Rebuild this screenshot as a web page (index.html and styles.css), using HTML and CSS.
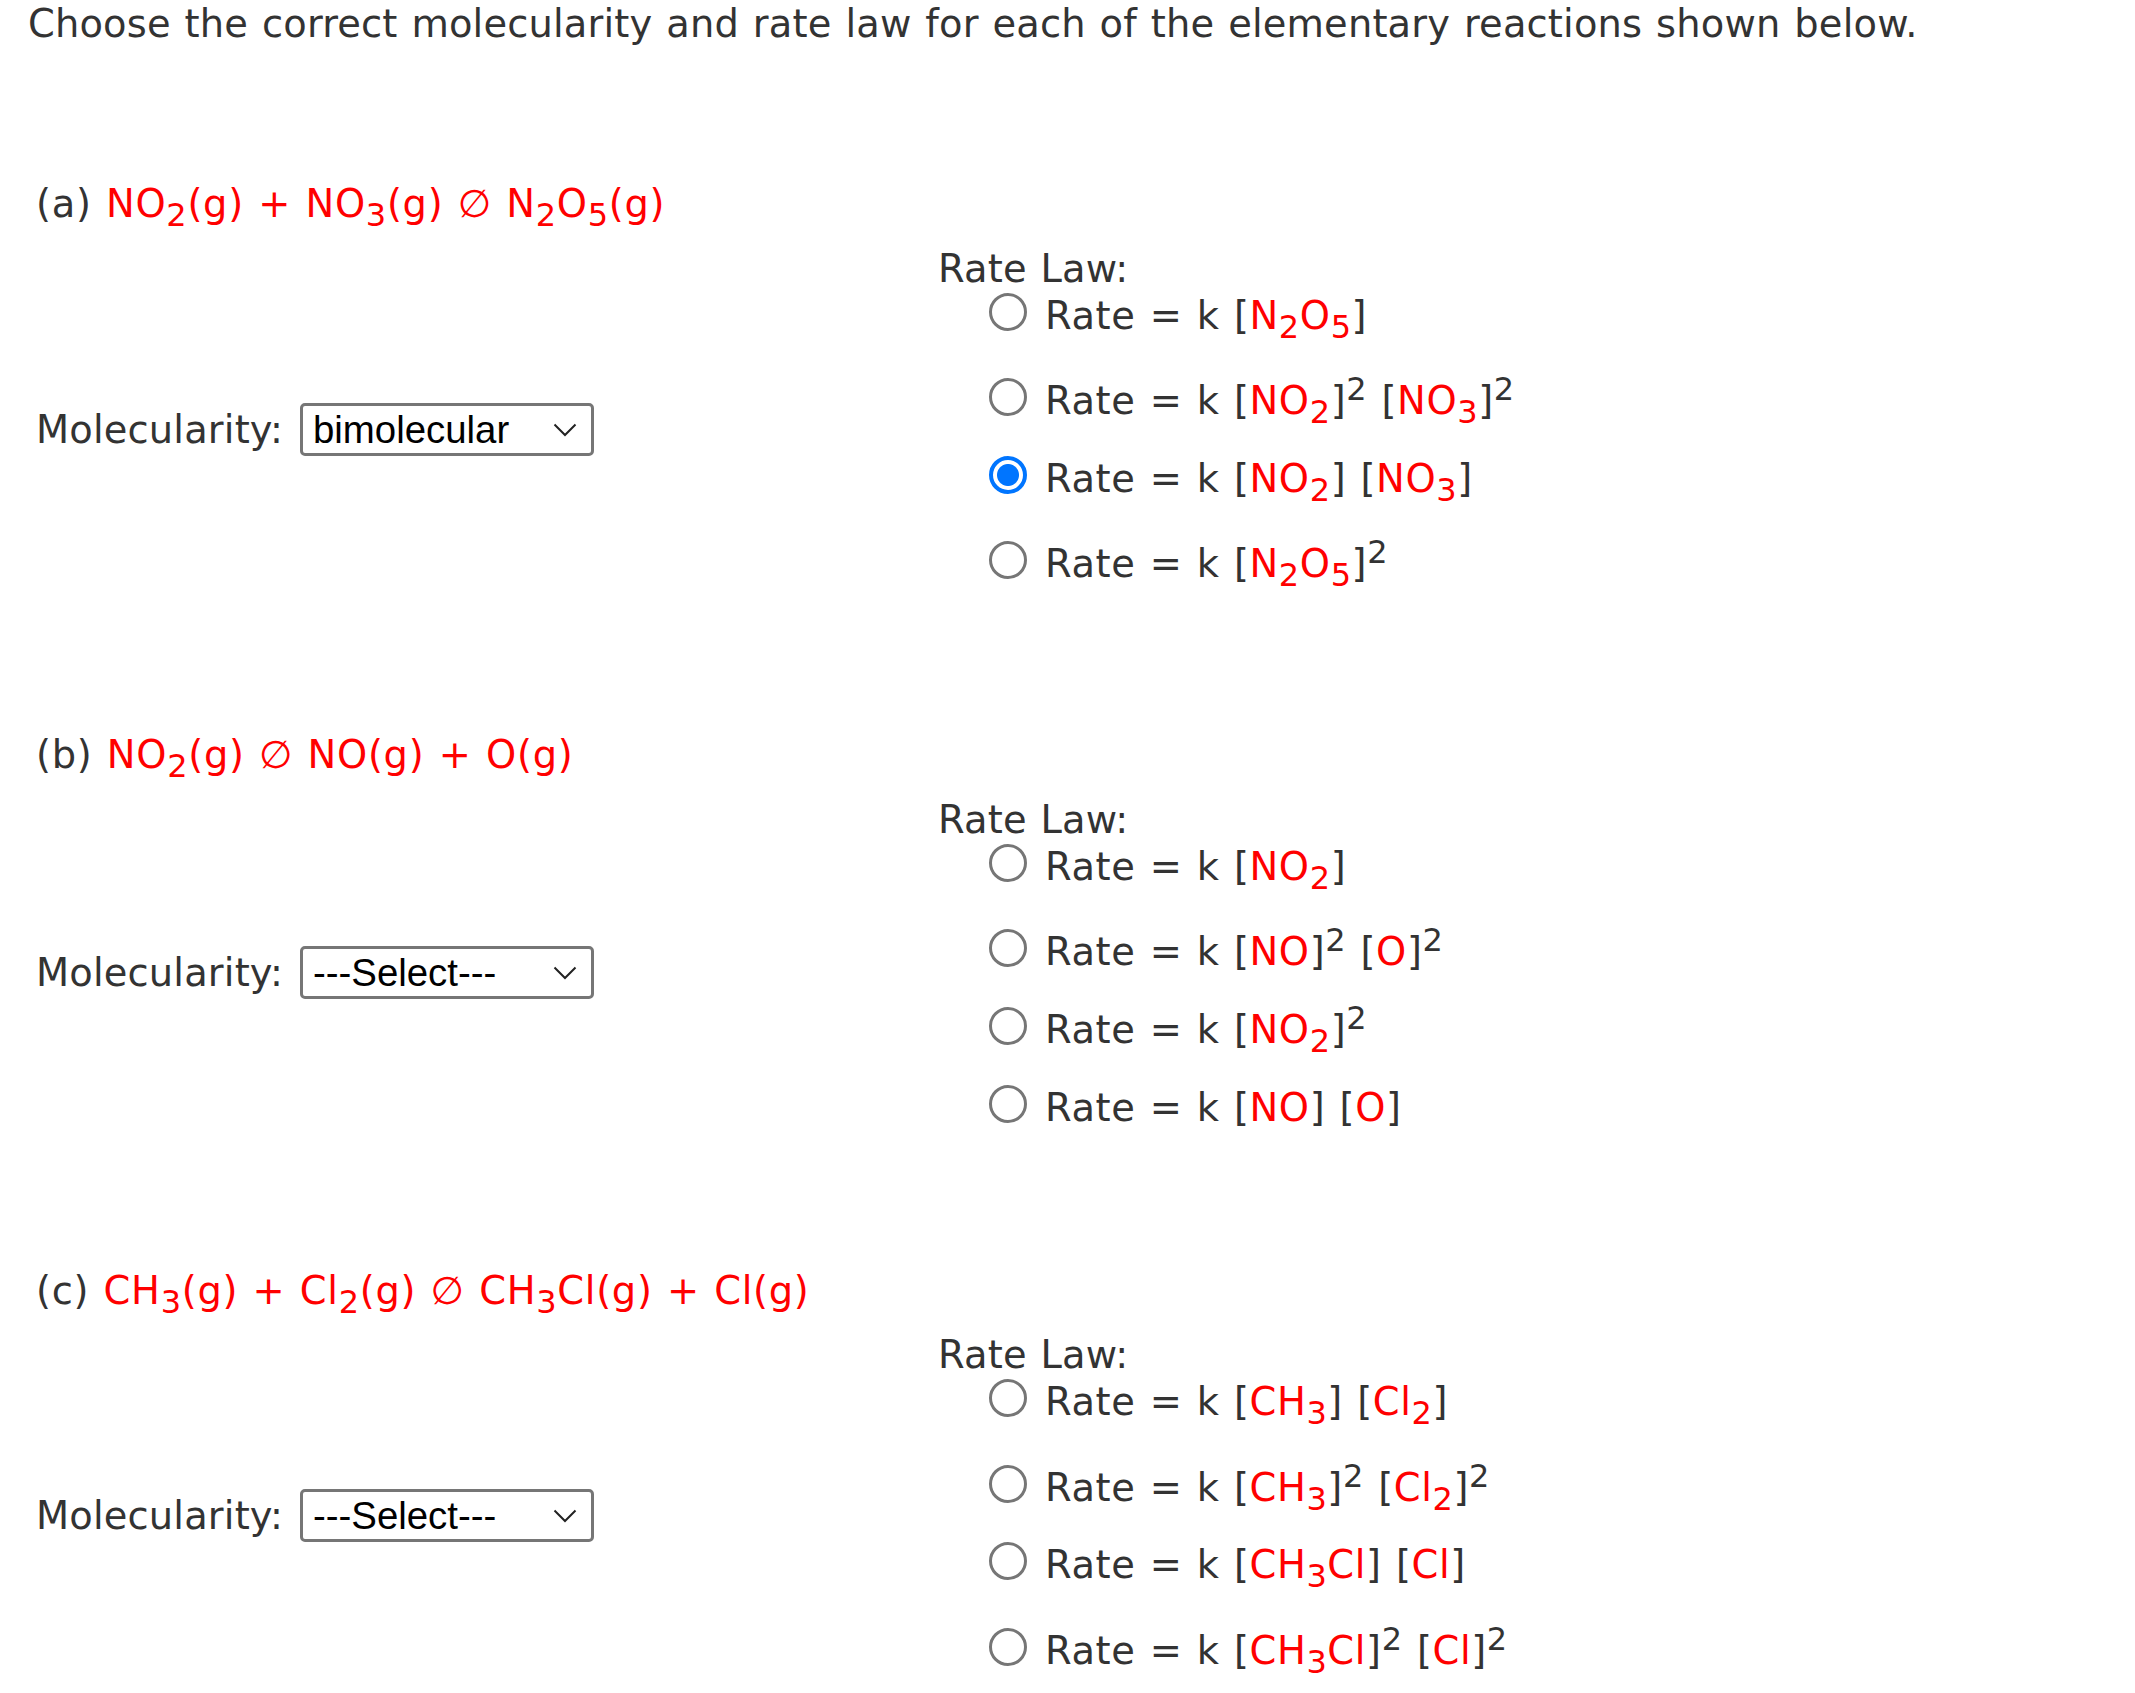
FILE: index.html
```html
<!DOCTYPE html>
<html lang="en">
<head>
<meta charset="utf-8">
<title>Molecularity and rate law</title>
<link rel="stylesheet" href="styles.css">
</head>
<body>
<div class="page">
  <p class="title">Choose the correct molecularity and rate law for each of the elementary reactions shown below.</p>

  <section class="part">
    <div class="rxn">(a) <span class="chem">NO<sub>2</sub>(g) + NO<sub>3</sub>(g) ∅ N<sub>2</sub>O<sub>5</sub>(g)</span></div>
    <div class="row">
      <div class="mol">
        <label class="mol-label" for="ma">Molecularity:</label> <span class="sel"><select id="ma">
          <option>---Select---</option>
          <option>unimolecular</option>
          <option selected>bimolecular</option>
          <option>termolecular</option>
        </select><svg class="chev" width="24" height="14" viewBox="0 0 24 14"><polyline points="1.5,1.5 12,12 22.5,1.5" fill="none" stroke="#222" stroke-width="2"/></svg></span>
      </div>
      <div class="rl">
        <div class="rl-h">Rate Law:</div>
        <label class="opt"><input type="radio" name="ra">Rate = k [<span class="chem">N<sub>2</sub>O<sub>5</sub></span>]</label>
        <label class="opt"><input type="radio" name="ra">Rate = k [<span class="chem">NO<sub>2</sub></span>]<sup>2</sup> [<span class="chem">NO<sub>3</sub></span>]<sup>2</sup></label>
        <label class="opt"><input type="radio" name="ra" checked>Rate = k [<span class="chem">NO<sub>2</sub></span>] [<span class="chem">NO<sub>3</sub></span>]</label>
        <label class="opt"><input type="radio" name="ra">Rate = k [<span class="chem">N<sub>2</sub>O<sub>5</sub></span>]<sup>2</sup></label>
      </div>
    </div>
  </section>

  <section class="part">
    <div class="rxn">(b) <span class="chem">NO<sub>2</sub>(g) ∅ NO(g) + O(g)</span></div>
    <div class="row">
      <div class="mol">
        <label class="mol-label" for="mb">Molecularity:</label> <span class="sel"><select id="mb">
          <option selected>---Select---</option>
          <option>unimolecular</option>
          <option>bimolecular</option>
          <option>termolecular</option>
        </select><svg class="chev" width="24" height="14" viewBox="0 0 24 14"><polyline points="1.5,1.5 12,12 22.5,1.5" fill="none" stroke="#222" stroke-width="2"/></svg></span>
      </div>
      <div class="rl">
        <div class="rl-h">Rate Law:</div>
        <label class="opt"><input type="radio" name="rb">Rate = k [<span class="chem">NO<sub>2</sub></span>]</label>
        <label class="opt"><input type="radio" name="rb">Rate = k [<span class="chem">NO</span>]<sup>2</sup> [<span class="chem">O</span>]<sup>2</sup></label>
        <label class="opt"><input type="radio" name="rb">Rate = k [<span class="chem">NO<sub>2</sub></span>]<sup>2</sup></label>
        <label class="opt"><input type="radio" name="rb">Rate = k [<span class="chem">NO</span>] [<span class="chem">O</span>]</label>
      </div>
    </div>
  </section>

  <section class="part">
    <div class="rxn">(c) <span class="chem">CH<sub>3</sub>(g) + Cl<sub>2</sub>(g) ∅ CH<sub>3</sub>Cl(g) + Cl(g)</span></div>
    <div class="row">
      <div class="mol">
        <label class="mol-label" for="mc">Molecularity:</label> <span class="sel"><select id="mc">
          <option selected>---Select---</option>
          <option>unimolecular</option>
          <option>bimolecular</option>
          <option>termolecular</option>
        </select><svg class="chev" width="24" height="14" viewBox="0 0 24 14"><polyline points="1.5,1.5 12,12 22.5,1.5" fill="none" stroke="#222" stroke-width="2"/></svg></span>
      </div>
      <div class="rl">
        <div class="rl-h">Rate Law:</div>
        <label class="opt"><input type="radio" name="rc">Rate = k [<span class="chem">CH<sub>3</sub></span>] [<span class="chem">Cl<sub>2</sub></span>]</label>
        <label class="opt"><input type="radio" name="rc">Rate = k [<span class="chem">CH<sub>3</sub></span>]<sup>2</sup> [<span class="chem">Cl<sub>2</sub></span>]<sup>2</sup></label>
        <label class="opt"><input type="radio" name="rc">Rate = k [<span class="chem">CH<sub>3</sub>Cl</span>] [<span class="chem">Cl</span>]</label>
        <label class="opt"><input type="radio" name="rc">Rate = k [<span class="chem">CH<sub>3</sub>Cl</span>]<sup>2</sup> [<span class="chem">Cl</span>]<sup>2</sup></label>
      </div>
    </div>
  </section>
</div>
</body>
</html>
```

FILE: styles.css
```css
html, body {
  margin: 0;
  padding: 0;
  background: #fff;
}

body {
  font-family: "DejaVu Sans", Verdana, sans-serif;
  font-size: 38.4px;
  line-height: normal;
  color: #333;
  letter-spacing: 0.165px;
  word-spacing: 1.5px;
}

.page {
  padding: 1px 0 0 36px;
}

.title {
  margin: 0 0 0 -8px;
  white-space: nowrap;
}

.part {
  margin-top: 135px;
}

.part + .part {
  margin-top: 138px;
}

.rxn {
  white-space: nowrap;
  letter-spacing: 0.7px;
}

.chem {
  color: #ff0000;
}

.row {
  display: flex;
  align-items: center;
  margin-top: 12px;
}

.mol {
  flex: 0 0 902px;
  padding-top: 19px;
  white-space: nowrap;
}

.sel {
  position: relative;
  display: inline-block;
  margin-left: 3px;
  letter-spacing: 0;
  word-spacing: 0;
}

.sel select {
  -webkit-appearance: none;
  appearance: none;
  box-sizing: border-box;
  width: 294px;
  height: 53px;
  margin: 0;
  padding: 0 0 0 10px;
  border: 3px solid #767676;
  border-radius: 5px;
  background: #fff;
  color: #000;
  font-family: "Liberation Sans", Arial, sans-serif;
  font-size: 38.4px;
  letter-spacing: 0;
  word-spacing: 0;
}

.chev {
  position: absolute;
  left: 253px;
  top: 20px;
  pointer-events: none;
}

.rl {
  white-space: nowrap;
}

.rl-h {
  margin-bottom: 2px;
}

.opt {
  display: block;
  margin-top: 25px;
  letter-spacing: 0.6px;
}

.rl-h + .opt {
  margin-top: 0;
}

.opt input {
  -webkit-appearance: none;
  appearance: none;
  box-sizing: border-box;
  width: 38px;
  height: 38px;
  margin: 0 18px 0 51px;
  border: 3px solid #767676;
  border-radius: 50%;
  background: #fff;
  vertical-align: -2px;
}

.opt input:checked {
  border: 4px solid #0075ff;
  background: radial-gradient(circle, #0075ff 0, #0075ff 10.5px, #fff 11.5px);
}
```
